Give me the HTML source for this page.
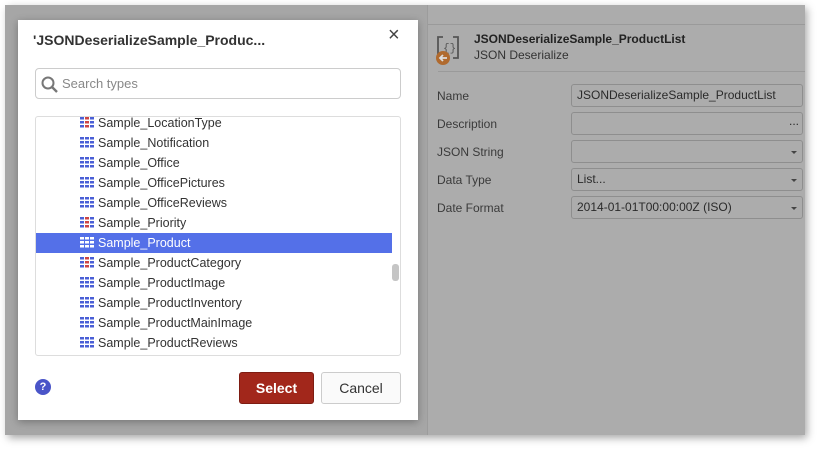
<!DOCTYPE html>
<html><head><style>
body{margin:0;width:819px;height:450px;background:#fff;position:relative;overflow:hidden;font-family:"Liberation Sans",sans-serif;}
.bg{position:absolute;left:5px;top:5px;width:799px;height:430px;background:#a6a6a6;box-shadow:3px 3px 8px rgba(0,0,0,.35);}
.rp{position:absolute;left:427px;top:5px;width:377px;height:430px;background:#acacac;border-left:1px solid #9c9c9c;}
.dlg{position:absolute;left:18px;top:20px;width:400px;height:400px;background:#fff;box-shadow:0 2px 8px rgba(0,0,0,.3);}
.lbl{position:absolute;left:437px;font-size:12px;color:#3a3a3a;}
.fld{position:absolute;left:571px;width:232px;height:23px;border:1px solid #8e8e8e;border-radius:3px;background:#acacac;font-size:12px;color:#2a2a2a;line-height:21px;padding-left:5px;box-sizing:border-box;}
.arr{position:absolute;right:5px;top:10px;border-left:3px solid transparent;border-right:3px solid transparent;border-top:3px solid #444;}
.row{position:absolute;left:0;width:356px;height:20px;font-size:12.5px;color:#333;line-height:20px;}
.row span{position:absolute;left:62px;}
.ic{position:absolute;left:44px;top:4px;width:14px;height:11px;}
.sel{background:#5470e8;color:#fff;}
</style></head><body>
<div class="bg"></div>
<div class="rp">
 <div style="position:absolute;left:0;top:19px;width:377px;border-top:1px solid #9a9a9a"></div>
 <div style="position:absolute;left:10px;top:66px;width:367px;border-top:1px solid #9a9a9a"></div>
</div>
<svg style="position:absolute;left:434px;top:32px" width="32" height="36">
 <path d="M9 5H4V26H9M19 5H24V26H19" stroke="#555" stroke-width="1.8" fill="none"/>
 <text x="9" y="19" font-size="11" fill="#555" font-family="Liberation Mono">{}</text>
 <circle cx="9" cy="26" r="7" fill="#b06a2e"/><path d="M13 26H6M9 23L6 26L9 29" stroke="#ddd" stroke-width="1.8" fill="none"/>
</svg>
<div style="position:absolute;left:474px;top:32px;font-size:12px;font-weight:bold;color:#222">JSONDeserializeSample_ProductList</div>
<div style="position:absolute;left:474px;top:48px;font-size:12px;color:#333">JSON Deserialize</div>
<div class="lbl" style="top:89px">Name</div><div class="fld" style="top:84px">JSONDeserializeSample_ProductList</div>
<div class="lbl" style="top:117px">Description</div><div class="fld" style="top:112px"><span style="position:absolute;right:3px;top:-2px">...</span></div>
<div class="lbl" style="top:145px">JSON String</div><div class="fld" style="top:140px"><i class="arr"></i></div>
<div class="lbl" style="top:173px">Data Type</div><div class="fld" style="top:168px">List...<i class="arr"></i></div>
<div class="lbl" style="top:201px">Date Format</div><div class="fld" style="top:196px">2014-01-01T00:00:00Z (ISO)<i class="arr"></i></div>

<svg width="0" height="0" style="position:absolute">
 <defs>
  <g id="b"><g fill="#4a5fd6"><rect x="0" y="0" width="4" height="2.5"/><rect x="5" y="0" width="4" height="2.5"/><rect x="10" y="0" width="4" height="2.5"/><rect x="0" y="4" width="4" height="2.5"/><rect x="5" y="4" width="4" height="2.5"/><rect x="10" y="4" width="4" height="2.5"/><rect x="0" y="8" width="4" height="2.5"/><rect x="5" y="8" width="4" height="2.5"/><rect x="10" y="8" width="4" height="2.5"/></g></g>
  <g id="r"><use href="#b"/><g fill="#c44"><rect x="5" y="0" width="4" height="2.5"/><rect x="5" y="4" width="4" height="2.5"/><rect x="5" y="8" width="4" height="2.5"/></g></g>
  <g id="w"><g fill="#fff"><rect x="0" y="0" width="4" height="2.5"/><rect x="5" y="0" width="4" height="2.5"/><rect x="10" y="0" width="4" height="2.5"/><rect x="0" y="4" width="4" height="2.5"/><rect x="5" y="4" width="4" height="2.5"/><rect x="10" y="4" width="4" height="2.5"/><rect x="0" y="8" width="4" height="2.5"/><rect x="5" y="8" width="4" height="2.5"/><rect x="10" y="8" width="4" height="2.5"/></g></g>
 </defs>
</svg>

<div class="dlg">
 <div style="position:absolute;left:15px;top:12px;font-size:14px;font-weight:bold;color:#333">'JSONDeserializeSample_Produc...</div>
 <div style="position:absolute;left:370px;top:4px;font-size:20px;color:#444">×</div>
 <div style="position:absolute;left:17px;top:48px;width:366px;height:31px;border:1px solid #ccc;border-radius:4px;box-sizing:border-box;">
  <svg style="position:absolute;left:4px;top:6px" width="20" height="20"><circle cx="8" cy="8" r="5.5" stroke="#777" stroke-width="2" fill="none"/><path d="M12 12L17 17" stroke="#777" stroke-width="2.4"/></svg>
  <span style="position:absolute;left:26px;top:7px;font-size:13px;color:#888">Search types</span>
 </div>
 <div style="position:absolute;left:17px;top:96px;width:366px;height:240px;border:1px solid #ddd;border-radius:3px;overflow:hidden;box-sizing:border-box;">
  <div style="position:absolute;left:356px;top:147px;width:7px;height:17px;background:#c5c5c5;border-radius:3px"></div>
  <div class="row" style="top:-4px"><svg class="ic"><use href="#r"/></svg><span>Sample_LocationType</span></div>
  <div class="row" style="top:16px"><svg class="ic"><use href="#b"/></svg><span>Sample_Notification</span></div>
  <div class="row" style="top:36px"><svg class="ic"><use href="#b"/></svg><span>Sample_Office</span></div>
  <div class="row" style="top:56px"><svg class="ic"><use href="#b"/></svg><span>Sample_OfficePictures</span></div>
  <div class="row" style="top:76px"><svg class="ic"><use href="#b"/></svg><span>Sample_OfficeReviews</span></div>
  <div class="row" style="top:96px"><svg class="ic"><use href="#r"/></svg><span>Sample_Priority</span></div>
  <div class="row sel" style="top:116px"><svg class="ic"><use href="#w"/></svg><span>Sample_Product</span></div>
  <div class="row" style="top:136px"><svg class="ic"><use href="#r"/></svg><span>Sample_ProductCategory</span></div>
  <div class="row" style="top:156px"><svg class="ic"><use href="#b"/></svg><span>Sample_ProductImage</span></div>
  <div class="row" style="top:176px"><svg class="ic"><use href="#b"/></svg><span>Sample_ProductInventory</span></div>
  <div class="row" style="top:196px"><svg class="ic"><use href="#b"/></svg><span>Sample_ProductMainImage</span></div>
  <div class="row" style="top:216px"><svg class="ic"><use href="#b"/></svg><span>Sample_ProductReviews</span></div>
 </div>
 <div style="position:absolute;left:17px;top:359px;width:16px;height:16px;border-radius:50%;background:#4a55c8;color:#fff;font-size:11px;font-weight:bold;text-align:center;line-height:16px">?</div>
 <div style="position:absolute;left:221px;top:352px;width:75px;height:32px;background:#a2271b;border:1px solid #7e1c12;border-radius:3px;box-sizing:border-box;color:#fff;font-size:14px;font-weight:bold;text-align:center;line-height:30px">Select</div>
 <div style="position:absolute;left:303px;top:352px;width:80px;height:32px;background:#fafafa;border:1px solid #ccc;border-radius:3px;box-sizing:border-box;color:#333;font-size:14px;text-align:center;line-height:30px">Cancel</div>
</div>
</body></html>
